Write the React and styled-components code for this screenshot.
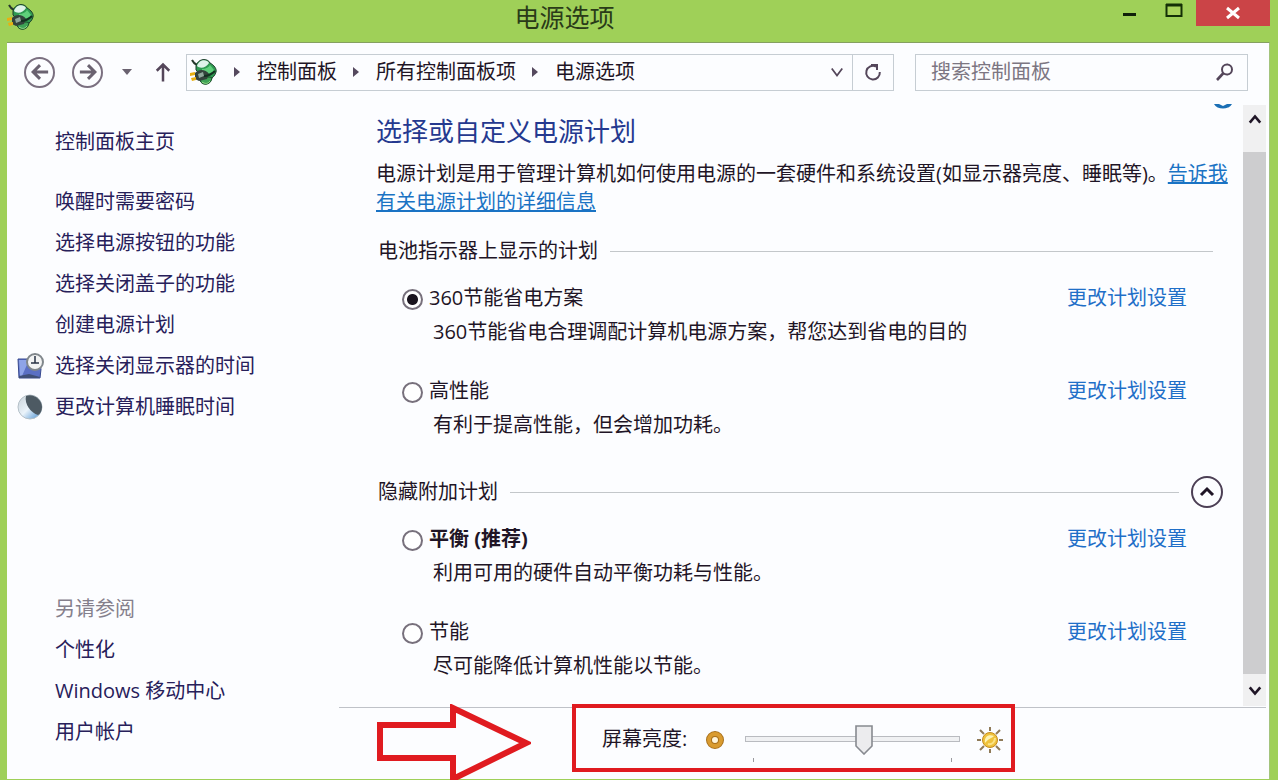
import React, { useState } from 'react';
import styled, { createGlobalStyle } from 'styled-components';

const tasks = [
  { text: "唤醒时需要密码" },
  { text: "选择电源按钮的功能" },
  { text: "选择关闭盖子的功能" },
  { text: "创建电源计划" },
  { text: "选择关闭显示器的时间", icon: "display" },
  { text: "更改计算机睡眠时间", icon: "sleep" },
];

const related = ["个性化", "Windows 移动中心", "用户帐户"];

const crumbs = ["控制面板", "所有控制面板项", "电源选项"];

const shownPlans = [
  { id: "eco360", name: "360节能省电方案", desc: "360节能省电合理调配计算机电源方案，帮您达到省电的目的" },
  { id: "high", name: "高性能", desc: "有利于提高性能，但会增加功耗。" },
];

const hiddenPlans = [
  { id: "balanced", name: "平衡 (推荐)", desc: "利用可用的硬件自动平衡功耗与性能。", bold: true },
  { id: "saver", name: "节能", desc: "尽可能降低计算机性能以节能。" },
];

const PowerIcon = () => (
  <svg width="28" height="28" viewBox="0 0 28 28" aria-hidden="true">
    <path d="M2 2 C3 4 5 6 7 7" stroke="#26382c" strokeWidth="2" fill="none" />
    <path d="M6 8 C8 0 18 0 20 5 C24 7 27 11 26 14 C25 18 22 20 20 22 L12 18 L6 12Z" fill="#2f9a52" stroke="#1c3b2a" strokeWidth="1" />
    <path d="M7 8 C9 1 17 1 19 5 C16 10 10 11 7 8Z" fill="#dff3ea" />
    <path d="M12 11 C16 11 19 9 20 7 L24 12 C22 16 16 16 12 15Z" fill="#5fd07b" />
    <path d="M10 22 C13 19 19 18 22 20 C21 28 11 28 10 22Z" fill="#3ea356" stroke="#174a28" strokeWidth="1" />
    <path d="M12 24 C15 26 18 26 20 23" stroke="#9be08b" strokeWidth="1" fill="none" />
    <path d="M5 15 C8 11 16 11 19 16 L17 21 L9 23 L5 21Z" fill="#33433c" />
    <path d="M8 16 L13 14 L14 18 L9 20Z" fill="#8fa79b" />
    <path d="M0 15 L5 14 L5 17 L0 18Z M1 20 L6 19 L6 22 L2 23Z" fill="#e8b012" />
    <path d="M14 18 C18 18 22 16 25 13" stroke="#123120" strokeWidth="2" fill="none" />
  </svg>
);

const TaskIcon = ({ kind }) => {
  if (kind === "display") {
    return <svg width="28" height="28" viewBox="0 0 28 28" aria-hidden="true">
      <path d="M1 7 H20 L24 17 L23 26 H2Z" fill="#5a6fc4" stroke="#37498f" />
      <path d="M2 8 H12 L5 24 H3Z" fill="#8ea4e8" />
      <path d="M2 24 L12 22 L23 25 L22 26 H2Z" fill="#3f4f78" />
      <circle cx="18" cy="10" r="8" fill="#f3f4f4" stroke="#80878c" strokeWidth="2" />
      <path d="M18 4 V11 M14 11 H22" stroke="#2a3345" strokeWidth="1.5" fill="none" />
    </svg>
  }
  if (kind === "sleep") {
    return <svg width="28" height="28" viewBox="0 0 28 28" aria-hidden="true">
      <defs>
        <linearGradient id="moon" x1="0" y1="0" x2="1" y2="1">
          <stop offset="0" stopColor="#c8d2d8" />
          <stop offset="0.5" stopColor="#eaf3fa" />
          <stop offset="1" stopColor="#3f8ad0" />
        </linearGradient>
      </defs>
      <circle cx="13" cy="14" r="12" fill="url(#moon)" stroke="#b4c0c8" />
      <path d="M9 3 C16 0 25 6 25 14 C25 18 23 21 21 22 C14 20 7 11 9 3Z" fill="#4d5a63" />
    </svg>
  }
  return null;
};

const Arrow = ({ d, size = 16, width = 2 }) => (
  <svg width={size} height={size} viewBox="0 0 16 16" fill="none" stroke="currentColor" strokeWidth={width} aria-hidden="true">
    <path d={d} />
  </svg>
);

const Plan = ({ plan, selected, onSelect }) => (
  <PlanBlock>
    <PlanRow>
      <input type="radio" name="plan" id={plan.id} checked={selected === plan.id} onChange={() => onSelect(plan.id)} />
      <PlanName htmlFor={plan.id} $bold={plan.bold}>{plan.name}</PlanName>
      <EditLink href="#edit">更改计划设置</EditLink>
    </PlanRow>
    <PlanDesc>{plan.desc}</PlanDesc>
  </PlanBlock>
);

export default function App() {
  const [selected, setSelected] = useState("eco360");
  const [expanded, setExpanded] = useState(true);
  const [brightness, setBrightness] = useState(56);

  return <Window>
    <GlobalStyle />
    <TitleBar>
      <PowerIcon />
      <Title>电源选项</Title>
      <WindowButtons>
        <WindowButton aria-label="最小化">
          <svg width="14" height="20"><path d="M0 14.5 H13" stroke="#10200a" strokeWidth="3" /></svg>
        </WindowButton>
        <WindowButton aria-label="最大化">
          <svg width="18" height="20"><path d="M1.5 5 H16.5 V16 H1.5Z" fill="#a9d45c" stroke="#143006" strokeWidth="2" /><path d="M1 5 H17" stroke="#143006" strokeWidth="3" /></svg>
        </WindowButton>
        <CloseButton aria-label="关闭">
          <svg width="16" height="14" viewBox="0 0 16 14"><path d="M2 2 L14 12 M14 2 L2 12" stroke="#ffffff" strokeWidth="3" /></svg>
        </CloseButton>
      </WindowButtons>
    </TitleBar>

    <Frame>
      <Toolbar>
        <RoundButtons>
          <RoundButton aria-label="后退"><Arrow size={20} width={2.4} d="M14.5 8 H2.5 M8 2.5 L2.5 8 L8 13.5" /></RoundButton>
          <RoundButton aria-label="前进"><Arrow size={20} width={2.4} d="M1.5 8 H13.5 M8 2.5 L13.5 8 L8 13.5" /></RoundButton>
        </RoundButtons>
        <IconButton aria-label="最近的位置">
          <svg width="10" height="6"><path d="M0 0 H10 L5 6Z" fill="#6a6270" /></svg>
        </IconButton>
        <IconButton aria-label="上移"><Arrow size={20} d="M8 15.5 V2 M3 7 L8 2 L13 7" /></IconButton>
        <AddressBar>
          <Path>
            <PowerIcon />
            {crumbs.map(c => <Crumb key={c}>
              <svg width="6" height="10" aria-hidden="true"><path d="M0 0 L6 5 L0 10Z" fill="#55495e" /></svg>
              <a href="#crumb">{c}</a>
            </Crumb>)}
          </Path>
          <IconButton aria-label="历史记录"><Arrow size={14} d="M2 4 L8 12 L14 4" /></IconButton>
          <Refresh aria-label="刷新">
            <svg width="18" height="20" viewBox="0 0 18 20" fill="none" stroke="#54465a" strokeWidth="2" aria-hidden="true">
              <path d="M12 4.5 A6.8 6.8 0 1 0 15.8 10" />
              <path d="M7 3 H13 V8" />
            </svg>
          </Refresh>
        </AddressBar>
        <SearchBox>
          <input type="text" placeholder="搜索控制面板" aria-label="搜索控制面板" />
          <svg width="18" height="18" viewBox="0 0 18 18" fill="none" stroke="#54465a" strokeWidth="2" aria-hidden="true">
            <circle cx="11" cy="6.5" r="5" />
            <path d="M7.5 10 L1 17" strokeWidth="2.6" />
          </svg>
        </SearchBox>
      </Toolbar>

      <Body>
        <Side>
          <HomeLink href="#home">控制面板主页</HomeLink>
          <nav>
            {tasks.map(t => <SideItem key={t.text}>
              <TaskIconBox><TaskIcon kind={t.icon} /></TaskIconBox>
              <a href="#task">{t.text}</a>
            </SideItem>)}
          </nav>
          <Related>
            <SideLabel>另请参阅</SideLabel>
            {related.map(r => <SideItem key={r}>
              <TaskIconBox />
              <a href="#related">{r}</a>
            </SideItem>)}
          </Related>
        </Side>

        <Main>
          <ScrollArea>
            <Content>
              <HelpEdge>
                <svg width="18" height="5"><path d="M0 0 H5 L9 2 L13 0 H18 C15 6 3 6 0 0Z" fill="#1b6fb5" /></svg>
              </HelpEdge>
              <Heading>选择或自定义电源计划</Heading>
              <Intro>
                电源计划是用于管理计算机如何使用电源的一套硬件和系统设置(如显示器亮度、睡眠等)。<a href="#more">告诉我有关电源计划的详细信息</a>
              </Intro>

              <Group>
                <GroupHeader $end={19}>
                  <h2>电池指示器上显示的计划</h2>
                  <Rule />
                </GroupHeader>
                {shownPlans.map(p => <Plan key={p.id} plan={p} selected={selected} onSelect={setSelected} />)}
              </Group>

              <Group>
                <GroupHeader $end={9}>
                  <h2>隐藏附加计划</h2>
                  <Rule />
                  <Toggle aria-label="隐藏附加计划" aria-expanded={expanded} onClick={() => setExpanded(!expanded)}>
                    <Arrow size={16} width={3} d={expanded ? "M2 11 L8 5 L14 11" : "M2 5 L8 11 L14 5"} />
                  </Toggle>
                </GroupHeader>
                {expanded && hiddenPlans.map(p => <Plan key={p.id} plan={p} selected={selected} onSelect={setSelected} />)}
              </Group>
            </Content>

            <ScrollBar>
              <ScrollButton $size={47} aria-label="向上滚动"><Arrow width={3} size={14} d="M2 11 L8 4 L14 11" /></ScrollButton>
              <ScrollThumb />
              <ScrollButton $size={32} aria-label="向下滚动"><Arrow width={3} size={14} d="M2 5 L8 12 L14 5" /></ScrollButton>
            </ScrollBar>
          </ScrollArea>

          <Footer>
            <svg width="154" height="76" viewBox="0 0 154 76" aria-hidden="true">
              <path d="M3 21 H76 V4 L149 39 L76 75 V54 H3Z" fill="#fcfdff" stroke="#e01b20" strokeWidth="6" />
            </svg>
            <Brightness>
              <label htmlFor="brightness">屏幕亮度:</label>
              <svg width="20" height="20" viewBox="0 0 20 20" aria-hidden="true">
                <circle cx="10" cy="10" r="6" fill="#fff6dd" stroke="#a8701c" strokeWidth="6" />
                <circle cx="10" cy="10" r="6" fill="none" stroke="#d99b30" strokeWidth="4" />
              </svg>
              <SliderBox>
                <Slider type="range" id="brightness" min="0" max="100" value={brightness} onChange={e => setBrightness(Number(e.target.value))} />
                <Ticks><i /><i /></Ticks>
              </SliderBox>
              <svg width="26" height="26" viewBox="0 0 26 26" aria-hidden="true">
                <path d="M13 0 V4 M13 22 V26 M0 13 H4 M22 13 H26 M3 3 L7 7 M19 19 L23 23 M23 3 L19 7 M7 19 L3 23" stroke="#8f7a58" strokeWidth="2" />
                <circle cx="13" cy="13" r="7.5" fill="#efc23c" stroke="#c58b1c" />
                <path d="M8 16 C7 9 12 7 17 9 C15 11 11 12 8 16Z" fill="#fdf3b4" />
                <path d="M11 17 C15 18 18 15 18 11" stroke="#fbe486" strokeWidth="2" fill="none" />
              </svg>
            </Brightness>
          </Footer>
        </Main>
      </Body>
    </Frame>
  </Window>
}

const GlobalStyle = createGlobalStyle`
  * { box-sizing: border-box; }
  body {
    margin: 0;
    background: #9fd058;
    color: #1f1526;
    font-family: "Open Sans", "Noto Sans CJK SC", sans-serif;
    font-size: 20px;
    line-height: 28px;
  }
  button {
    display: flex;
    align-items: center;
    justify-content: center;
    padding: 0;
    border: 0;
    background: none;
    color: inherit;
  }
  a { color: inherit; text-decoration: none; }
  svg { display: block; flex-shrink: 0; }
`

const Window = styled.div`
  display: flex;
  flex-direction: column;
  min-height: 100vh;
  padding: 0 8px 1px 7px;
  background: #9fd058;
`

const TitleBar = styled.header`
  display: flex;
  align-items: center;
  height: 42px;
  padding-bottom: 8px;
`

const Title = styled.h1`
  flex: 1;
  margin: 0;
  color: #2a3b18;
  font-size: 25px;
  font-weight: 400;
  line-height: 34px;
  text-align: center;
`

const WindowButtons = styled.div`
  display: flex;
  align-self: flex-start;
  margin-left: 14px;
`

const WindowButton = styled.button`
  width: 44px;
  height: 20px;
`

const CloseButton = styled.button`
  width: 74px;
  height: 26px;
  background: #cb4447;
`

const Frame = styled.div`
  display: flex;
  flex: 1;
  flex-direction: column;
  border-top: 1px solid #85a060;
  border-right: 1px solid #a3c47c;
  background: #fcfdff;
`

const Toolbar = styled.div`
  display: flex;
  align-items: center;
  height: 61px;
  padding: 0 21px 3px 17px;
`

const RoundButtons = styled.div`
  display: flex;
  gap: 17px;
`

const RoundButton = styled.button`
  width: 31px;
  height: 31px;
  border: 2px solid #7b7080;
  border-radius: 50%;
  color: #6a6270;
`

const IconButton = styled.button`
  width: 24px;
  height: 30px;
  margin-left: 12px;
  color: #54465a;
`

const AddressBar = styled.div`
  display: flex;
  flex: 1;
  align-items: center;
  height: 37px;
  margin-left: 11px;
  border: 1px solid #c6cdd3;
`

const Path = styled.nav`
  display: flex;
  flex: 1;
  align-items: center;
  padding-left: 3px;
`

const Crumb = styled.span`
  display: flex;
  align-items: center;
  gap: 17px;
  margin-left: 16px;
`

const Refresh = styled.button`
  width: 41px;
  align-self: stretch;
  margin-left: 3px;
  border-left: 1px solid #c6cdd3;
`

const SearchBox = styled.div`
  display: flex;
  align-items: center;
  width: 333px;
  height: 37px;
  margin-left: 21px;
  padding: 0 13px 0 15px;
  border: 1px solid #c6cdd3;
  & > input {
    flex: 1;
    min-width: 0;
    padding: 0;
    border: 0;
    outline: none;
    background: none;
    font: inherit;
  }
  & > input::placeholder { color: #7c7682; }
`

const Body = styled.div`
  display: flex;
  flex: 1;
`

const Side = styled.aside`
  display: flex;
  flex-direction: column;
  width: 332px;
  padding: 17px 0 27px 10px;
  color: #27205a;
`

const HomeLink = styled.a`
  margin: 0 0 19px 38px;
  line-height: 41px;
`

const SideItem = styled.div`
  display: flex;
  align-items: center;
  gap: 10px;
  height: 41px;
`

const TaskIconBox = styled.span`
  width: 28px;
`

const Related = styled.div`
  margin-top: auto;
`

const SideLabel = styled.div`
  margin-left: 38px;
  color: #85808c;
  line-height: 41px;
`

const Main = styled.main`
  display: flex;
  flex: 1;
  flex-direction: column;
  min-width: 0;
`

const ScrollArea = styled.div`
  display: flex;
  flex: 1;
  padding-right: 3px;
`

const Content = styled.div`
  flex: 1;
  padding: 0 11px 0 37px;
`

const HelpEdge = styled.div`
  display: flex;
  justify-content: flex-end;
  height: 11px;
`

const Heading = styled.h2`
  margin: 0 0 13px;
  color: #25398f;
  font-size: 26px;
  font-weight: 400;
  line-height: 32px;
`

const Intro = styled.p`
  margin: 0 0 17px;
  line-break: anywhere;
  & > a {
    color: #1a73c4;
    text-decoration: underline;
  }
`

const Group = styled.section`
  margin-bottom: 32px;
  &:last-child { margin-bottom: 0; }
`

const GroupHeader = styled.div`
  display: flex;
  align-items: center;
  gap: 12px;
  height: 36px;
  margin-bottom: 12px;
  padding: 0 ${props => props.$end}px 0 2px;
  & > h2 {
    margin: 0;
    font-size: 20px;
    font-weight: 400;
  }
`

const Rule = styled.span`
  flex: 1;
  height: 1px;
  background: #c3c7ca;
`

const Toggle = styled.button`
  width: 32px;
  height: 32px;
  border: 2px solid #4c3f55;
  border-radius: 50%;
`

const PlanBlock = styled.div`
  padding: 0 45px 0 26px;
  & + & { margin-top: 25px; }
`

const PlanRow = styled.div`
  display: flex;
  align-items: center;
  height: 34px;
  & > input {
    appearance: none;
    width: 21px;
    height: 21px;
    margin: 3px 6px 0 0;
    border: 2px solid #77707c;
    border-radius: 50%;
    background: #ffffff;
  }
  & > input:checked {
    background: radial-gradient(circle, #1a141e 5px, #ffffff 6px);
  }
`

const PlanName = styled.label`
  flex: 1;
  font-weight: ${props => props.$bold ? 700 : 400};
`

const EditLink = styled.a`
  color: #1f6fc8;
`

const PlanDesc = styled.p`
  margin: 0;
  padding-left: 31px;
  line-height: 34px;
`

const ScrollBar = styled.div`
  display: flex;
  flex-direction: column;
  width: 23px;
  padding: 1px 0;
`

const ScrollButton = styled.button`
  height: ${props => props.$size}px;
  padding-bottom: ${props => props.$size > 40 ? 18 : 0}px;
  background: #f0f0f1;
`

const ScrollThumb = styled.div`
  flex: 1;
  background: #cdcdcf;
`

const Footer = styled.footer`
  display: flex;
  height: 72px;
  margin-right: 3px;
  padding-left: 38px;
  border-top: 1px solid #bfc2c8;
  & > svg { margin-top: -4px; }
`

const Brightness = styled.div`
  display: flex;
  align-items: center;
  width: 443px;
  height: 68px;
  margin: -4px 0 0 41px;
  padding: 0 8px 0 26px;
  border: 4px solid #e01b20;
  background: #fcfdff;
  & > label { margin: 2px 8px 0 0; }
  & > svg { margin: 3px 0 0 10px; }
`

const SliderBox = styled.div`
  flex: 1;
  margin: 9px 7px 0 20px;
`

const thumb = "%3Csvg xmlns='http://www.w3.org/2000/svg' width='18' height='30'%3E%3Cpath d='M1 1H17V21L9 29L1 21Z' fill='%23ececee' stroke='%23878a90' stroke-width='1.6'/%3E%3C/svg%3E";

const Slider = styled.input`
  appearance: none;
  display: block;
  width: 100%;
  height: 30px;
  margin: 0;
  background: none;
  &::-webkit-slider-runnable-track {
    height: 6px;
    border: 1px solid #b9bbc0;
    background: #f0f1f3;
  }
  &::-webkit-slider-thumb {
    appearance: none;
    width: 18px;
    height: 30px;
    margin-top: -12px;
    background: url("data:image/svg+xml,${thumb}");
  }
`

const Ticks = styled.div`
  display: flex;
  justify-content: space-between;
  padding: 4px 8px 0;
  & > i {
    width: 1px;
    height: 4px;
    background: #9a9a9e;
  }
`
